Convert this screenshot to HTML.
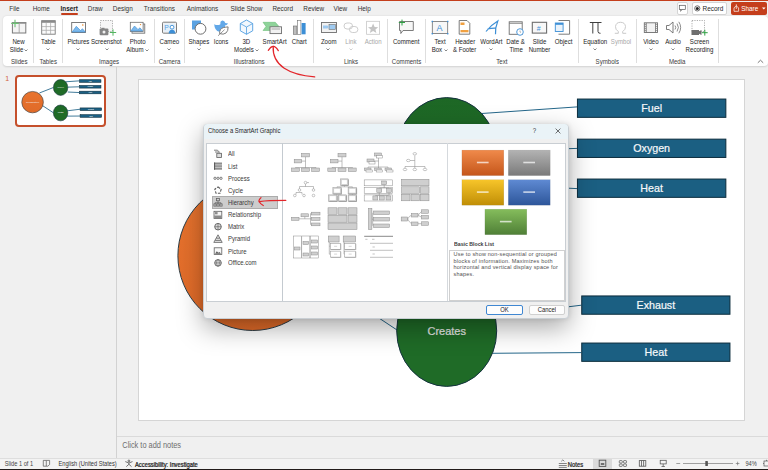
<!DOCTYPE html><html><head><meta charset="utf-8"><style>
*{margin:0;padding:0;box-sizing:border-box}
html,body{width:768px;height:470px;overflow:hidden;background:#f0f0f0;font-family:"Liberation Sans",sans-serif}
.t{position:absolute;white-space:nowrap;font-family:"Liberation Sans",sans-serif;transform:scaleY(1.12)}
.r{position:absolute}
svg{position:absolute;left:0;top:0}
</style></head><body>
<div class="r" style="left:0px;top:0px;width:768px;height:1px;background:#c43e1c"></div>
<div class="t" style="left:-45.62px;width:120px;text-align:center;top:4.82px;font-size:6.4px;line-height:8.959999999999999px;color:#323232;font-weight:400;">File</div>
<div class="t" style="left:-18.75px;width:120px;text-align:center;top:4.82px;font-size:6.4px;line-height:8.959999999999999px;color:#323232;font-weight:400;">Home</div>
<div class="t" style="left:9.25px;width:120px;text-align:center;top:4.82px;font-size:6.4px;line-height:8.959999999999999px;color:#202020;font-weight:700;">Insert</div>
<div class="t" style="left:35.25px;width:120px;text-align:center;top:4.82px;font-size:6.4px;line-height:8.959999999999999px;color:#323232;font-weight:400;">Draw</div>
<div class="t" style="left:62.75px;width:120px;text-align:center;top:4.82px;font-size:6.4px;line-height:8.959999999999999px;color:#323232;font-weight:400;">Design</div>
<div class="t" style="left:99.38px;width:120px;text-align:center;top:4.82px;font-size:6.4px;line-height:8.959999999999999px;color:#323232;font-weight:400;">Transitions</div>
<div class="t" style="left:142.50px;width:120px;text-align:center;top:4.82px;font-size:6.4px;line-height:8.959999999999999px;color:#323232;font-weight:400;">Animations</div>
<div class="t" style="left:186.50px;width:120px;text-align:center;top:4.82px;font-size:6.4px;line-height:8.959999999999999px;color:#323232;font-weight:400;">Slide Show</div>
<div class="t" style="left:222.75px;width:120px;text-align:center;top:4.82px;font-size:6.4px;line-height:8.959999999999999px;color:#323232;font-weight:400;">Record</div>
<div class="t" style="left:253.75px;width:120px;text-align:center;top:4.82px;font-size:6.4px;line-height:8.959999999999999px;color:#323232;font-weight:400;">Review</div>
<div class="t" style="left:280.38px;width:120px;text-align:center;top:4.82px;font-size:6.4px;line-height:8.959999999999999px;color:#323232;font-weight:400;">View</div>
<div class="t" style="left:304.25px;width:120px;text-align:center;top:4.82px;font-size:6.4px;line-height:8.959999999999999px;color:#323232;font-weight:400;">Help</div>
<div class="r" style="left:60.5px;top:13.3px;width:17.700000000000003px;height:1.5px;background:#c43e1c;border-radius:1px"></div>
<div class="r" style="left:677px;top:2.2px;width:10.5px;height:12.600000000000001px;background:#fff;border:1px solid #d4d4d4;border-radius:2px"></div>
<div class="r" style="left:692.4px;top:2.4px;width:34.200000000000045px;height:12.4px;background:#fff;border:1px solid #d4d4d4;border-radius:2px"></div>
<div class="r" style="left:731px;top:2.2px;width:36px;height:12.600000000000001px;background:#c43e1c;border-radius:2px"></div>
<div class="t" style="left:702.50px;top:4.49px;font-size:6.45px;line-height:9.03px;color:#262626;font-weight:400;">Record</div>
<div class="t" style="left:741.20px;top:4.52px;font-size:6.4px;line-height:8.959999999999999px;color:#fff;font-weight:400;">Share</div>
<svg width="768" height="16" style="left:0;top:0"><rect x="679.3" y="5.3" width="6" height="4.3" fill="none" stroke="#555" stroke-width="0.7"/><path d="M680.5 9.6 V11.3 L682.3 9.6" fill="none" stroke="#555" stroke-width="0.6"/><circle cx="697.3" cy="8.4" r="2.6" fill="none" stroke="#333" stroke-width="0.7"/><circle cx="697.3" cy="8.4" r="1.5" fill="#222"/><path d="M734 11.3 V7.8 L736.3 6 L738.6 7.8 V11.3 Z M736.3 4.3 L736.3 9" fill="none" stroke="#fff" stroke-width="0.7"/><path d="M762 7.6 L763.8 9.4 L765.6 7.6 Z" fill="#fff"/></svg>
<div class="r" style="left:3px;top:16px;width:764.6px;height:50.2px;background:#fff;border-radius:4px;box-shadow:0 0.8px 2px rgba(0,0,0,0.13)"></div>
<div class="r" style="left:33.0px;top:19px;width:0.7999999999999972px;height:44.4px;background:#dedede"></div>
<div class="r" style="left:62.0px;top:19px;width:0.7999999999999972px;height:44.4px;background:#dedede"></div>
<div class="r" style="left:154.0px;top:19px;width:0.8000000000000114px;height:44.4px;background:#dedede"></div>
<div class="r" style="left:184.3px;top:19px;width:0.8000000000000114px;height:44.4px;background:#dedede"></div>
<div class="r" style="left:313.25px;top:19px;width:0.8000000000000114px;height:44.4px;background:#dedede"></div>
<div class="r" style="left:387.0px;top:19px;width:0.8000000000000114px;height:44.4px;background:#dedede"></div>
<div class="r" style="left:424.9px;top:19px;width:0.8000000000000114px;height:44.4px;background:#dedede"></div>
<div class="r" style="left:578.0px;top:19px;width:0.7999999999999545px;height:44.4px;background:#dedede"></div>
<div class="r" style="left:635.75px;top:19px;width:0.7999999999999545px;height:44.4px;background:#dedede"></div>
<div class="r" style="left:718.0px;top:19px;width:0.7999999999999545px;height:44.4px;background:#dedede"></div>
<div class="t" style="left:-41.50px;width:120px;text-align:center;top:37.93px;font-size:6.1px;line-height:8.54px;color:#1e1e1e;font-weight:400;">New</div>
<div class="t" style="left:-43.50px;width:120px;text-align:center;top:46.23px;font-size:6.1px;line-height:8.54px;color:#1e1e1e;font-weight:400;">Slide</div>
<svg style="left:24.3px;top:49.3px" width="4" height="3"><path d="M0.5 0.5 L2 2 L3.5 0.5" stroke="#555" stroke-width="0.7" fill="none"/></svg>
<div class="t" style="left:-11.60px;width:120px;text-align:center;top:37.93px;font-size:6.1px;line-height:8.54px;color:#1e1e1e;font-weight:400;">Table</div>
<svg style="left:46.4px;top:47.8px" width="4" height="3"><path d="M0.5 0.5 L2 2 L3.5 0.5" stroke="#555" stroke-width="0.7" fill="none"/></svg>
<div class="t" style="left:18.40px;width:120px;text-align:center;top:37.93px;font-size:6.1px;line-height:8.54px;color:#1e1e1e;font-weight:400;">Pictures</div>
<svg style="left:76.4px;top:47.8px" width="4" height="3"><path d="M0.5 0.5 L2 2 L3.5 0.5" stroke="#555" stroke-width="0.7" fill="none"/></svg>
<div class="t" style="left:46.30px;width:120px;text-align:center;top:37.93px;font-size:6.1px;line-height:8.54px;color:#1e1e1e;font-weight:400;">Screenshot</div>
<svg style="left:105px;top:47.8px" width="4" height="3"><path d="M0.5 0.5 L2 2 L3.5 0.5" stroke="#555" stroke-width="0.7" fill="none"/></svg>
<div class="t" style="left:77.70px;width:120px;text-align:center;top:37.93px;font-size:6.1px;line-height:8.54px;color:#1e1e1e;font-weight:400;">Photo</div>
<div class="t" style="left:74.90px;width:120px;text-align:center;top:46.23px;font-size:6.1px;line-height:8.54px;color:#1e1e1e;font-weight:400;">Album</div>
<svg style="left:145px;top:49.3px" width="4" height="3"><path d="M0.5 0.5 L2 2 L3.5 0.5" stroke="#555" stroke-width="0.7" fill="none"/></svg>
<div class="t" style="left:109.40px;width:120px;text-align:center;top:37.93px;font-size:6.1px;line-height:8.54px;color:#1e1e1e;font-weight:400;">Cameo</div>
<svg style="left:167.1px;top:47.8px" width="4" height="3"><path d="M0.5 0.5 L2 2 L3.5 0.5" stroke="#555" stroke-width="0.7" fill="none"/></svg>
<div class="t" style="left:138.90px;width:120px;text-align:center;top:37.93px;font-size:6.1px;line-height:8.54px;color:#1e1e1e;font-weight:400;">Shapes</div>
<svg style="left:196.75px;top:47.8px" width="4" height="3"><path d="M0.5 0.5 L2 2 L3.5 0.5" stroke="#555" stroke-width="0.7" fill="none"/></svg>
<div class="t" style="left:161.00px;width:120px;text-align:center;top:37.93px;font-size:6.1px;line-height:8.54px;color:#1e1e1e;font-weight:400;">Icons</div>
<div class="t" style="left:186.40px;width:120px;text-align:center;top:37.93px;font-size:6.1px;line-height:8.54px;color:#1e1e1e;font-weight:400;">3D</div>
<div class="t" style="left:183.90px;width:120px;text-align:center;top:46.23px;font-size:6.1px;line-height:8.54px;color:#1e1e1e;font-weight:400;">Models</div>
<svg style="left:254.5px;top:49.3px" width="4" height="3"><path d="M0.5 0.5 L2 2 L3.5 0.5" stroke="#555" stroke-width="0.7" fill="none"/></svg>
<div class="t" style="left:214.60px;width:120px;text-align:center;top:37.93px;font-size:6.1px;line-height:8.54px;color:#1e1e1e;font-weight:400;">SmartArt</div>
<div class="t" style="left:239.20px;width:120px;text-align:center;top:37.93px;font-size:6.1px;line-height:8.54px;color:#1e1e1e;font-weight:400;">Chart</div>
<div class="t" style="left:268.70px;width:120px;text-align:center;top:37.93px;font-size:6.1px;line-height:8.54px;color:#1e1e1e;font-weight:400;">Zoom</div>
<svg style="left:326.1px;top:47.8px" width="4" height="3"><path d="M0.5 0.5 L2 2 L3.5 0.5" stroke="#555" stroke-width="0.7" fill="none"/></svg>
<div class="t" style="left:290.90px;width:120px;text-align:center;top:37.93px;font-size:6.1px;line-height:8.54px;color:#a8a8a8;font-weight:400;">Link</div>
<svg style="left:348.6px;top:47.8px" width="4" height="3"><path d="M0.5 0.5 L2 2 L3.5 0.5" stroke="#bbb" stroke-width="0.7" fill="none"/></svg>
<div class="t" style="left:313.10px;width:120px;text-align:center;top:37.93px;font-size:6.1px;line-height:8.54px;color:#a8a8a8;font-weight:400;">Action</div>
<div class="t" style="left:346.20px;width:120px;text-align:center;top:37.93px;font-size:6.1px;line-height:8.54px;color:#1e1e1e;font-weight:400;">Comment</div>
<div class="t" style="left:380.00px;width:120px;text-align:center;top:37.93px;font-size:6.1px;line-height:8.54px;color:#1e1e1e;font-weight:400;">Text</div>
<div class="t" style="left:376.90px;width:120px;text-align:center;top:46.23px;font-size:6.1px;line-height:8.54px;color:#1e1e1e;font-weight:400;">Box</div>
<svg style="left:443.6px;top:49.3px" width="4" height="3"><path d="M0.5 0.5 L2 2 L3.5 0.5" stroke="#555" stroke-width="0.7" fill="none"/></svg>
<div class="t" style="left:405.20px;width:120px;text-align:center;top:37.93px;font-size:6.1px;line-height:8.54px;color:#1e1e1e;font-weight:400;">Header</div>
<div class="t" style="left:404.60px;width:120px;text-align:center;top:46.23px;font-size:6.1px;line-height:8.54px;color:#1e1e1e;font-weight:400;">&amp; Footer</div>
<div class="t" style="left:431.40px;width:120px;text-align:center;top:37.93px;font-size:6.1px;line-height:8.54px;color:#1e1e1e;font-weight:400;">WordArt</div>
<svg style="left:489.25px;top:47.8px" width="4" height="3"><path d="M0.5 0.5 L2 2 L3.5 0.5" stroke="#555" stroke-width="0.7" fill="none"/></svg>
<div class="t" style="left:455.60px;width:120px;text-align:center;top:37.93px;font-size:6.1px;line-height:8.54px;color:#1e1e1e;font-weight:400;">Date &amp;</div>
<div class="t" style="left:456.20px;width:120px;text-align:center;top:46.23px;font-size:6.1px;line-height:8.54px;color:#1e1e1e;font-weight:400;">Time</div>
<div class="t" style="left:479.50px;width:120px;text-align:center;top:37.93px;font-size:6.1px;line-height:8.54px;color:#1e1e1e;font-weight:400;">Slide</div>
<div class="t" style="left:479.50px;width:120px;text-align:center;top:46.23px;font-size:6.1px;line-height:8.54px;color:#1e1e1e;font-weight:400;">Number</div>
<div class="t" style="left:503.60px;width:120px;text-align:center;top:37.93px;font-size:6.1px;line-height:8.54px;color:#1e1e1e;font-weight:400;">Object</div>
<div class="t" style="left:535.20px;width:120px;text-align:center;top:37.93px;font-size:6.1px;line-height:8.54px;color:#1e1e1e;font-weight:400;">Equation</div>
<svg style="left:593px;top:47.8px" width="4" height="3"><path d="M0.5 0.5 L2 2 L3.5 0.5" stroke="#555" stroke-width="0.7" fill="none"/></svg>
<div class="t" style="left:561.00px;width:120px;text-align:center;top:37.93px;font-size:6.1px;line-height:8.54px;color:#a8a8a8;font-weight:400;">Symbol</div>
<div class="t" style="left:590.90px;width:120px;text-align:center;top:37.93px;font-size:6.1px;line-height:8.54px;color:#1e1e1e;font-weight:400;">Video</div>
<svg style="left:648.6px;top:47.8px" width="4" height="3"><path d="M0.5 0.5 L2 2 L3.5 0.5" stroke="#555" stroke-width="0.7" fill="none"/></svg>
<div class="t" style="left:613.10px;width:120px;text-align:center;top:37.93px;font-size:6.1px;line-height:8.54px;color:#1e1e1e;font-weight:400;">Audio</div>
<svg style="left:671.1px;top:47.8px" width="4" height="3"><path d="M0.5 0.5 L2 2 L3.5 0.5" stroke="#555" stroke-width="0.7" fill="none"/></svg>
<div class="t" style="left:639.50px;width:120px;text-align:center;top:37.93px;font-size:6.1px;line-height:8.54px;color:#1e1e1e;font-weight:400;">Screen</div>
<div class="t" style="left:639.50px;width:120px;text-align:center;top:46.23px;font-size:6.1px;line-height:8.54px;color:#1e1e1e;font-weight:400;">Recording</div>
<div class="t" style="left:-40.80px;width:120px;text-align:center;top:58.03px;font-size:6.1px;line-height:8.54px;color:#3c3c3c;font-weight:400;">Slides</div>
<div class="t" style="left:-11.80px;width:120px;text-align:center;top:58.03px;font-size:6.1px;line-height:8.54px;color:#3c3c3c;font-weight:400;">Tables</div>
<div class="t" style="left:49.10px;width:120px;text-align:center;top:58.03px;font-size:6.1px;line-height:8.54px;color:#3c3c3c;font-weight:400;">Images</div>
<div class="t" style="left:109.50px;width:120px;text-align:center;top:58.03px;font-size:6.1px;line-height:8.54px;color:#3c3c3c;font-weight:400;">Camera</div>
<div class="t" style="left:189.20px;width:120px;text-align:center;top:58.03px;font-size:6.1px;line-height:8.54px;color:#3c3c3c;font-weight:400;">Illustrations</div>
<div class="t" style="left:291.00px;width:120px;text-align:center;top:58.03px;font-size:6.1px;line-height:8.54px;color:#3c3c3c;font-weight:400;">Links</div>
<div class="t" style="left:346.50px;width:120px;text-align:center;top:58.03px;font-size:6.1px;line-height:8.54px;color:#3c3c3c;font-weight:400;">Comments</div>
<div class="t" style="left:441.90px;width:120px;text-align:center;top:58.03px;font-size:6.1px;line-height:8.54px;color:#3c3c3c;font-weight:400;">Text</div>
<div class="t" style="left:547.30px;width:120px;text-align:center;top:58.03px;font-size:6.1px;line-height:8.54px;color:#3c3c3c;font-weight:400;">Symbols</div>
<div class="t" style="left:617.20px;width:120px;text-align:center;top:58.03px;font-size:6.1px;line-height:8.54px;color:#3c3c3c;font-weight:400;">Media</div>
<svg style="left:757px;top:59px" width="7" height="5"><path d="M0.8 3.8 L3.5 1.2 L6.2 3.8" stroke="#555" stroke-width="0.8" fill="none"/></svg>
<svg width="768" height="70" style="left:0;top:0"><rect x="12.4" y="22.6" width="13.4" height="10.4" fill="#f4f4f4" stroke="#7a7a7a" stroke-width="1"/><rect x="12" y="22.1" width="14.2" height="1.6" fill="#8a8a8a"/><path d="M19.2 23.7 V33" stroke="#9a9a9a" stroke-width="0.8"/><path d="M15 19.7 V27.2 M11.2 23.4 H18.8" stroke="#6cc074" stroke-width="1.1"/><rect x="41.7" y="20.7" width="13.5" height="13.5" fill="#fbfbfb" stroke="#7a7a7a" stroke-width="0.9"/><rect x="41.5" y="20.5" width="13.9" height="2.3" fill="#8a8a8a"/><path d="M46.2 22.8 V34 M50.6 22.8 V34 M42 26.6 H55 M42 30.3 H55" stroke="#a8a8a8" stroke-width="0.75"/><rect x="71.7" y="22.5" width="13.8" height="10" fill="#fff" stroke="#6e6e6e" stroke-width="0.9"/><path d="M72.2 32 L76.3 26.3 L80.5 30.5 L82.5 28.8 L85.3 32 Z" fill="#7db9ec" stroke="#3d8fd6" stroke-width="0.6"/><circle cx="82.8" cy="25" r="0.8" fill="#f08a24"/><rect x="100.5" y="20.5" width="12" height="11" fill="#f6f6f6" stroke="#8a8a8a" stroke-width="0.7" stroke-dasharray="1.2 1.2"/><rect x="99.6" y="28.6" width="8.8" height="6.6" rx="1" fill="#858585"/><rect x="101.5" y="27.8" width="3" height="1.2" fill="#858585"/><circle cx="104" cy="31.9" r="1.5" fill="#f0f0f0"/><path d="M113 29.3 V35.7 M109.8 32.5 H116.2" stroke="#52b560" stroke-width="1"/><rect x="132" y="24" width="12.8" height="9.2" fill="#e8e8e8" stroke="#6e6e6e" stroke-width="0.8"/><rect x="130.3" y="22.3" width="12.8" height="9.2" fill="#fff" stroke="#6e6e6e" stroke-width="0.8"/><path d="M130.8 31 L134.5 26 L138 29.5 L140 27.8 L142.6 31 Z" fill="#7db9ec" stroke="#3d8fd6" stroke-width="0.6"/><circle cx="140.5" cy="24.6" r="0.7" fill="#f08a24"/><rect x="162.5" y="22.2" width="14" height="11" rx="1" fill="#f2f2f2" stroke="#6e6e6e" stroke-width="0.9"/><rect x="164" y="23.6" width="11" height="8.2" fill="#e3effa"/><text x="164.3" y="30" font-size="6.8" fill="#5aa2e2" font-family="Liberation Sans">P</text><circle cx="172" cy="27.2" r="1.9" fill="#fff" stroke="#3d8fd6" stroke-width="0.9"/><path d="M168.6 33.6 Q168.8 29.8 172 29.8 Q175.2 29.8 175.4 33.6Z" fill="#3d8fd6"/><rect x="192" y="20.5" width="9" height="9" fill="#5aa2e2"/><circle cx="200.5" cy="28.8" r="5.4" fill="#fff" stroke="#6e6e6e" stroke-width="1"/><path d="M214.2 24.2 Q214.6 30.8 219.3 31.8 L222.8 31.6 Q225.6 28.2 224.9 25.6 L226.6 24.9 L228.1 23.4 L225.3 23.1 Q224.6 20.4 222.4 20.6 Q220 21 220.4 24.2 Q217.8 26 214.2 24.2 Z" fill="#62a8e8"/><path d="M219.6 33.6 Q219.4 28.8 223.4 27.6 Q226 27 228.1 26.9 Q228.3 31 226 33 Q223.4 35 219.6 33.6 Z" fill="#fff" stroke="#6e6e6e" stroke-width="0.9"/><path d="M218 35.8 L224.6 29.6" stroke="#6e6e6e" stroke-width="0.7"/><path d="M246.5 20 L252.7 23.5 V30.8 L246.5 34.3 L240.3 30.8 V23.5 Z" fill="#f3f8fd" stroke="#4f9de0" stroke-width="0.9"/><path d="M240.3 23.5 L246.5 27 L252.7 23.5 M246.5 27 V34.3" fill="none" stroke="#4f9de0" stroke-width="0.8"/><path d="M263 22.3 L275.3 22.3 L279 26.5 L275.3 30.5 L263 30.5 L266 26.4 Z" fill="#8fd39a" stroke="#5cb96a" stroke-width="0.5"/><rect x="270" y="26.8" width="11.5" height="6.8" fill="#f2f2f2" stroke="#6e6e6e" stroke-width="0.9"/><line x1="271.5" y1="29" x2="280" y2="29" stroke="#6e6e6e" stroke-width="0.6"/><rect x="293.3" y="26" width="3.6" height="8.3" fill="#bdbdbd" stroke="#6e6e6e" stroke-width="0.6"/><rect x="297.3" y="20.5" width="3.6" height="13.8" fill="#fff" stroke="#6e6e6e" stroke-width="0.6"/><rect x="301.6" y="23" width="4" height="11.3" fill="#3d8fd6"/><rect x="321.5" y="22.5" width="15" height="10" fill="#f2f2f2" stroke="#6e6e6e" stroke-width="0.9"/><rect x="329" y="24.5" width="6.3" height="5" fill="#9fcaf0" stroke="#6e6e6e" stroke-width="0.6"/><path d="M323 25.5 H327.5 L329 27 L327.5 28.5 H323 Z" fill="#9fcaf0"/><rect x="344" y="23" width="8.5" height="6" rx="3" fill="none" stroke="#c8c8c8" stroke-width="0.9"/><rect x="349.4" y="26.5" width="8.5" height="6" rx="3" fill="none" stroke="#c8c8c8" stroke-width="0.9"/><rect x="366.6" y="21.3" width="13" height="13" fill="none" stroke="#c8c8c8" stroke-width="0.8"/><path d="M373.1 23.5 L374.6 27 L378.2 27.2 L375.4 29.4 L376.4 33 L373.1 31 L369.8 33 L370.8 29.4 L368 27.2 L371.6 27 Z" fill="#c4c4c4"/><path d="M399.5 21.5 H413.3 V30.5 H403 L400.8 33.5 V30.5 H399.5 Z" fill="#f7f7f7" stroke="#6e6e6e" stroke-width="0.9"/><path d="M402 19.6 V25.5 M398.8 22.5 H405" stroke="#2ea043" stroke-width="1"/><rect x="432.3" y="21.5" width="15.4" height="12" fill="#f7f7f7" stroke="#6e6e6e" stroke-width="0.8"/><text x="436.5" y="31" font-size="9" fill="#3d8fd6" font-family="Liberation Sans">A</text><g fill="#3d8fd6"><rect x="431.6" y="20.8" width="1.4" height="1.4"/><rect x="447" y="20.8" width="1.4" height="1.4"/><rect x="431.6" y="33" width="1.4" height="1.4"/><rect x="447" y="33" width="1.4" height="1.4"/></g><path d="M459.2 20.5 H467 L469.8 23.3 V34.2 H459.2 Z" fill="#fff" stroke="#6e6e6e" stroke-width="0.9"/><rect x="460.5" y="22.5" width="4" height="2.5" fill="#f0a040"/><rect x="460.5" y="30" width="8" height="2.3" fill="#f0a040"/><path d="M486 31.5 Q491 25 497.8 21 Q495 28 495.5 34.3 M487.5 29 Q492 28 496 28.2" fill="none" stroke="#3d8fd6" stroke-width="1.2"/><rect x="509.2" y="21.8" width="13" height="12.5" fill="#fff" stroke="#6e6e6e" stroke-width="0.9"/><path d="M509.2 23.3 H522.2" stroke="#6e6e6e" stroke-width="0.8"/><circle cx="520" cy="32" r="3.3" fill="#fff" stroke="#3d8fd6" stroke-width="0.9"/><path d="M520 30.5 V32 L521 32.5" stroke="#6e6e6e" stroke-width="0.5" fill="none"/><rect x="532.3" y="22.3" width="14.3" height="10.8" fill="#f7f7f7" stroke="#6e6e6e" stroke-width="1.1"/><text x="536.8" y="30.6" font-size="7" fill="#3d8fd6" font-family="Liberation Sans">#</text><path d="M558.5 20.5 H569.6 V34.2 H558.5" fill="#fff" stroke="#6e6e6e" stroke-width="0.9"/><rect x="555.3" y="23" width="7.8" height="8.5" fill="#eaf3fb" stroke="#3d8fd6" stroke-width="0.9"/><rect x="555.3" y="23" width="7.8" height="1.8" fill="#3d8fd6"/><path d="M589.8 22.5 H601.5 M592.8 22.5 V33.5 M598 22.5 V31.5 Q598 33.5 600.5 33.3" fill="none" stroke="#404040" stroke-width="1"/><path d="M614.8 33.3 H618.3 V31.5 Q615.2 29.5 615.5 26.5 Q616 22.3 620.5 22.3 Q625 22.3 625.5 26.5 Q625.8 29.5 622.7 31.5 V33.3 H626.2" fill="none" stroke="#c4c4c4" stroke-width="0.9"/><rect x="644.3" y="22.8" width="13.2" height="9.7" fill="#f2f2f2" stroke="#6e6e6e" stroke-width="0.9"/><path d="M646.3 23 V32.3 M655.5 23 V32.3" stroke="#6e6e6e" stroke-width="0.8"/><path d="M644.5 24.5 H646 M644.5 26.5 H646 M644.5 28.5 H646 M644.5 30.5 H646 M655.8 24.5 H657.3 M655.8 26.5 H657.3 M655.8 28.5 H657.3 M655.8 30.5 H657.3" stroke="#6e6e6e" stroke-width="0.6"/><path d="M666.5 25.5 H669 L673 22 V33 L669 29.5 H666.5 Z" fill="#fff" stroke="#6e6e6e" stroke-width="0.9"/><path d="M675 25.5 Q676.5 27.5 675 29.5 M677 23.5 Q679.8 27.5 677 31.5 M678.8 21.8 Q682.5 27.5 678.8 33.3" fill="none" stroke="#6e6e6e" stroke-width="0.8"/><rect x="692" y="20.5" width="12.5" height="11" fill="none" stroke="#8a8a8a" stroke-width="0.7" stroke-dasharray="1.2 1.2"/><rect x="691.5" y="30" width="7.5" height="5" fill="#6e6e6e"/><path d="M699 31.2 L701.5 30 V35 L699 33.8Z" fill="#6e6e6e"/><path d="M704.8 29.8 V35.6 M701.9 32.7 H707.7" stroke="#2ea043" stroke-width="1"/></svg>
<div class="r" style="left:116.1px;top:66.5px;width:0.7000000000000028px;height:391.5px;background:#d2d2d2"></div>
<div class="t" style="left:5.30px;top:73.70px;font-size:7px;line-height:9.799999999999999px;color:#d0613f;font-weight:400;">1</div>
<div class="r" style="left:14.5px;top:74.7px;width:91.4px;height:52.5px;border:2.1px solid #c5502c;border-radius:4px;background:#fff"></div>
<svg style="left:16.4px;top:76.6px" width="87.60" height="48.80" viewBox="0 0 606.1 340.8" preserveAspectRatio="none"><line x1="162.70" y1="111.40" x2="259.20" y2="73.40" stroke="#24668a" stroke-width="6"/><line x1="179.70" y1="197.40" x2="259.30" y2="250.20" stroke="#24668a" stroke-width="6"/><line x1="343.90" y1="33.50" x2="439.00" y2="26.90" stroke="#24668a" stroke-width="6"/><line x1="358.30" y1="70.90" x2="439.00" y2="68.40" stroke="#24668a" stroke-width="6"/><line x1="358.70" y1="104.90" x2="439.00" y2="108.60" stroke="#24668a" stroke-width="6"/><line x1="356.70" y1="235.90" x2="443.30" y2="225.20" stroke="#24668a" stroke-width="6"/><line x1="354.50" y1="273.30" x2="443.30" y2="272.60" stroke="#24668a" stroke-width="6"/><defs><linearGradient id="og2" x1="0" y1="0" x2="0" y2="1"><stop offset="0" stop-color="#e8742f"/><stop offset="1" stop-color="#e06a28"/></linearGradient><linearGradient id="gg2" x1="0" y1="0" x2="0" y2="1"><stop offset="0" stop-color="#1d6725"/><stop offset="0.4" stop-color="#1f6b27"/><stop offset="1" stop-color="#1f6b27"/></linearGradient></defs><circle cx="114.69999999999999" cy="175.70000000000002" r="74.8" fill="url(#og2)" stroke="#2a3b45" stroke-width="4"/><ellipse cx="308.7" cy="73.1" rx="50" ry="55.5" fill="url(#gg2)" stroke="#15323f" stroke-width="4"/><ellipse cx="308.7" cy="250.9" rx="50" ry="55.5" fill="url(#gg2)" stroke="#15323f" stroke-width="4"/><rect x="439.45" y="19.05" width="148.40" height="18.30" fill="#1b5f82" stroke="#0b2c3c" stroke-width="4"/><text x="513.65" y="32.00" font-size="10.7" fill="#f6f8fa" stroke="#f6f8fa" stroke-width="0.2" text-anchor="middle" font-family="Liberation Sans">Fuel</text><rect x="439.45" y="59.15" width="148.40" height="18.30" fill="#1b5f82" stroke="#0b2c3c" stroke-width="4"/><text x="513.65" y="72.10" font-size="10.7" fill="#f6f8fa" stroke="#f6f8fa" stroke-width="0.2" text-anchor="middle" font-family="Liberation Sans">Oxygen</text><rect x="439.45" y="99.05" width="148.40" height="18.30" fill="#1b5f82" stroke="#0b2c3c" stroke-width="4"/><text x="513.65" y="112.00" font-size="10.7" fill="#f6f8fa" stroke="#f6f8fa" stroke-width="0.2" text-anchor="middle" font-family="Liberation Sans">Heat</text><rect x="443.75" y="215.95" width="148.20" height="18.30" fill="#1b5f82" stroke="#0b2c3c" stroke-width="4"/><text x="517.85" y="228.90" font-size="10.7" fill="#f6f8fa" stroke="#f6f8fa" stroke-width="0.2" text-anchor="middle" font-family="Liberation Sans">Exhaust</text><rect x="443.75" y="263.05" width="148.20" height="18.30" fill="#1b5f82" stroke="#0b2c3c" stroke-width="4"/><text x="517.85" y="276.00" font-size="10.7" fill="#f6f8fa" stroke="#f6f8fa" stroke-width="0.2" text-anchor="middle" font-family="Liberation Sans">Heat</text><text x="308.7" y="254.8" font-size="11" fill="#e8e8e8" stroke="#e8e8e8" stroke-width="0.2" text-anchor="middle" font-family="Liberation Sans">Creates</text><text x="308.7" y="77.0" font-size="11" fill="#e6e6e6" text-anchor="middle" font-family="Liberation Sans">Requires</text><text x="114.69999999999999" y="181.20000000000002" font-size="17" fill="#f4f4f4" text-anchor="middle" font-family="Liberation Sans">Combustion</text></svg>
<div class="r" style="left:139px;top:80px;width:605px;height:340px;background:#fff;box-shadow:0 0 0 1px rgba(0,0,0,0.11)"></div>
<svg style="left:138.3px;top:79.6px" width="606.1" height="340.8" viewBox="0 0 606.1 340.8"><line x1="162.70" y1="111.40" x2="259.20" y2="73.40" stroke="#24668a" stroke-width="1.0"/><line x1="179.70" y1="197.40" x2="259.30" y2="250.20" stroke="#24668a" stroke-width="1.0"/><line x1="343.90" y1="33.50" x2="439.00" y2="26.90" stroke="#24668a" stroke-width="1.0"/><line x1="358.30" y1="70.90" x2="439.00" y2="68.40" stroke="#24668a" stroke-width="1.0"/><line x1="358.70" y1="104.90" x2="439.00" y2="108.60" stroke="#24668a" stroke-width="1.0"/><line x1="356.70" y1="235.90" x2="443.30" y2="225.20" stroke="#24668a" stroke-width="1.0"/><line x1="354.50" y1="273.30" x2="443.30" y2="272.60" stroke="#24668a" stroke-width="1.0"/><defs><linearGradient id="og" x1="0" y1="0" x2="0" y2="1"><stop offset="0" stop-color="#e8742f"/><stop offset="1" stop-color="#e06a28"/></linearGradient><linearGradient id="gg" x1="0" y1="0" x2="0" y2="1"><stop offset="0" stop-color="#1d6725"/><stop offset="0.4" stop-color="#1f6b27"/><stop offset="1" stop-color="#1f6b27"/></linearGradient></defs><circle cx="114.69999999999999" cy="175.70000000000002" r="74.8" fill="url(#og)" stroke="#2a3b45" stroke-width="1.0"/><ellipse cx="308.7" cy="73.1" rx="50" ry="55.5" fill="url(#gg)" stroke="#15323f" stroke-width="1.0"/><ellipse cx="308.7" cy="250.9" rx="50" ry="55.5" fill="url(#gg)" stroke="#15323f" stroke-width="1.0"/><rect x="439.45" y="19.05" width="148.40" height="18.30" fill="#1b5f82" stroke="#0b2c3c" stroke-width="1.0"/><text x="513.65" y="32.00" font-size="10.7" fill="#f6f8fa" stroke="#f6f8fa" stroke-width="0.2" text-anchor="middle" font-family="Liberation Sans">Fuel</text><rect x="439.45" y="59.15" width="148.40" height="18.30" fill="#1b5f82" stroke="#0b2c3c" stroke-width="1.0"/><text x="513.65" y="72.10" font-size="10.7" fill="#f6f8fa" stroke="#f6f8fa" stroke-width="0.2" text-anchor="middle" font-family="Liberation Sans">Oxygen</text><rect x="439.45" y="99.05" width="148.40" height="18.30" fill="#1b5f82" stroke="#0b2c3c" stroke-width="1.0"/><text x="513.65" y="112.00" font-size="10.7" fill="#f6f8fa" stroke="#f6f8fa" stroke-width="0.2" text-anchor="middle" font-family="Liberation Sans">Heat</text><rect x="443.75" y="215.95" width="148.20" height="18.30" fill="#1b5f82" stroke="#0b2c3c" stroke-width="1.0"/><text x="517.85" y="228.90" font-size="10.7" fill="#f6f8fa" stroke="#f6f8fa" stroke-width="0.2" text-anchor="middle" font-family="Liberation Sans">Exhaust</text><rect x="443.75" y="263.05" width="148.20" height="18.30" fill="#1b5f82" stroke="#0b2c3c" stroke-width="1.0"/><text x="517.85" y="276.00" font-size="10.7" fill="#f6f8fa" stroke="#f6f8fa" stroke-width="0.2" text-anchor="middle" font-family="Liberation Sans">Heat</text><text x="308.7" y="254.8" font-size="11" fill="#e8e8e8" stroke="#e8e8e8" stroke-width="0.2" text-anchor="middle" font-family="Liberation Sans">Creates</text><text x="308.7" y="77.0" font-size="11" fill="#e6e6e6" text-anchor="middle" font-family="Liberation Sans">Requires</text><text x="114.69999999999999" y="181.20000000000002" font-size="17" fill="#f4f4f4" text-anchor="middle" font-family="Liberation Sans">Combustion</text></svg>
<div class="r" style="left:117px;top:435.5px;width:651px;height:1.0px;background:#dadada"></div>
<div class="t" style="left:122.30px;top:440.92px;font-size:7.4px;line-height:10.36px;color:#6e6e6e;font-weight:400;">Click to add notes</div>
<div class="r" style="left:0px;top:459px;width:768px;height:11px;background:#f3f3f3"></div>
<div class="r" style="left:0px;top:458.3px;width:768px;height:0.6999999999999886px;background:#dedede"></div>
<div class="r" style="left:0px;top:468.5px;width:768px;height:1.5px;background:#221c1a"></div>
<div class="t" style="left:4.70px;top:460.91px;font-size:5.7px;line-height:7.9799999999999995px;color:#444;font-weight:400;">Slide 1 of 1</div>
<div class="t" style="left:58.50px;top:460.91px;font-size:5.7px;line-height:7.9799999999999995px;color:#333;font-weight:400;">English (United States)</div>
<div class="t" style="left:135.00px;top:460.64px;font-size:5.8px;line-height:8.12px;color:#1a1a1a;font-weight:400;-webkit-text-stroke:0.22px #1a1a1a">Accessibility: Investigate</div>
<div class="t" style="left:567.80px;top:460.70px;font-size:5.85px;line-height:8.19px;color:#222;font-weight:400;-webkit-text-stroke:0.2px #222">Notes</div>
<div class="r" style="left:593.2px;top:459px;width:19.0px;height:9.600000000000023px;background:#dadada"></div>
<div class="t" style="right:11.20px;text-align:right;top:460.91px;font-size:5.7px;line-height:7.9799999999999995px;color:#444;font-weight:400;">94%</div>
<svg width="768" height="470" style="left:0;top:0">
<path d="M43.3 460.4 H46.3 V466.2 H43.3 Z M46.3 460.4 H49.6 V464.6 L47.8 466.2 H46.3" fill="none" stroke="#555" stroke-width="0.7"/>
<g fill="none" stroke="#444" stroke-width="0.75"><circle cx="128.9" cy="460.9" r="0.9"/><path d="M125.3 461.6 L128.9 463 L132.5 461.6 M128.9 463 V464.3 L126.3 466.6 M128.9 464.3 L131.5 466.6"/></g>
<g stroke="#555" stroke-width="0.7" fill="none"><path d="M558.8 463.5 H566.8 M558.8 465.5 H566.8 M558.8 467.4 H566.8"/><path d="M561.3 461.3 L562.8 459.9 L564.3 461.3"/></g>
<rect x="599.2" y="460.2" width="6.6" height="6.2" fill="none" stroke="#555" stroke-width="0.9"/><rect x="600.8" y="463.2" width="3.5" height="1.6" fill="#555"/>
<g fill="none" stroke="#555" stroke-width="0.75"><rect x="619.3" y="460.6" width="3" height="2.4" rx="0.6"/><rect x="623.5" y="460.6" width="3" height="2.4" rx="0.6"/><rect x="619.3" y="464" width="3" height="2.4" rx="0.6"/><rect x="623.5" y="464" width="3" height="2.4" rx="0.6"/></g>
<g fill="none" stroke="#555" stroke-width="0.8"><rect x="639.3" y="460.6" width="6.5" height="5.6"/><path d="M641.5 460.6 V466.2 M643.6 460.6 V466.2"/></g>
<g fill="none" stroke="#555" stroke-width="0.75"><rect x="660.2" y="460.3" width="6" height="3.6"/><path d="M663.2 463.9 V466.3 M661.5 466.5 H664.9"/></g>
<path d="M676.3 463.5 H680.2 M683 463.5 H733 M735.8 463.5 H739.4 M737.6 461.7 V465.3" stroke="#666" stroke-width="0.6"/>
<rect x="705.3" y="460.9" width="2.6" height="5.2" rx="0.6" fill="#555"/>
<g fill="none" stroke="#555" stroke-width="0.7"><rect x="764" y="461" width="5" height="5"/><path d="M763 463.5 H764 M766.5 459.8 V461"/></g>
</svg>
<div class="r" style="left:203.2px;top:123.6px;width:365.7px;height:195.6px;background:#f0f0f0;border:0.8px solid #c9cfd4;border-radius:4px;box-shadow:0 9px 26px rgba(0,0,0,0.34),0 0 5px rgba(0,0,0,0.1);overflow:hidden"></div>
<div class="r" style="left:204.0px;top:124.39999999999999px;width:364.1px;height:14.600000000000009px;background:#eaf3f7;border-radius:3.5px 3.5px 0 0"></div>
<div class="t" style="left:208.00px;top:127.47px;font-size:5.9px;line-height:8.26px;color:#1f1f1f;font-weight:400;">Choose a SmartArt Graphic</div>
<div class="t" style="left:474.60px;width:120px;text-align:center;top:126.86px;font-size:6.2px;line-height:8.68px;color:#333;font-weight:400;">?</div>
<svg style="left:554.5px;top:128.3px" width="6" height="6"><path d="M0.6 0.6 L5.4 5.4 M5.4 0.6 L0.6 5.4" stroke="#333" stroke-width="0.7"/></svg>
<div class="r" style="left:206.4px;top:142.5px;width:359.6px;height:159.5px;background:#fff;border:0.8px solid #c9ced3"></div>
<div class="r" style="left:282.1px;top:142.7px;width:0.7999999999999545px;height:158.8px;background:#c4cad0"></div>
<div class="r" style="left:446.5px;top:142.7px;width:0.8000000000000114px;height:158.8px;background:#d5d9dd"></div>
<div class="r" style="left:212.3px;top:196.4px;width:65.30000000000001px;height:12.299999999999983px;background:#cdcdcd;border:0.8px solid #acacac"></div>
<div class="t" style="left:228.00px;top:150.20px;font-size:6.0px;line-height:8.399999999999999px;color:#3a3a3a;font-weight:400;">All</div>
<div class="t" style="left:228.00px;top:162.50px;font-size:6.0px;line-height:8.399999999999999px;color:#3a3a3a;font-weight:400;">List</div>
<div class="t" style="left:228.00px;top:174.70px;font-size:6.0px;line-height:8.399999999999999px;color:#3a3a3a;font-weight:400;">Process</div>
<div class="t" style="left:228.00px;top:186.80px;font-size:6.0px;line-height:8.399999999999999px;color:#3a3a3a;font-weight:400;">Cycle</div>
<div class="t" style="left:228.00px;top:199.00px;font-size:6.0px;line-height:8.399999999999999px;color:#3a3a3a;font-weight:400;">Hierarchy</div>
<div class="t" style="left:228.00px;top:211.30px;font-size:6.0px;line-height:8.399999999999999px;color:#3a3a3a;font-weight:400;">Relationship</div>
<div class="t" style="left:228.00px;top:223.10px;font-size:6.0px;line-height:8.399999999999999px;color:#3a3a3a;font-weight:400;">Matrix</div>
<div class="t" style="left:228.00px;top:235.20px;font-size:6.0px;line-height:8.399999999999999px;color:#3a3a3a;font-weight:400;">Pyramid</div>
<div class="t" style="left:228.00px;top:247.50px;font-size:6.0px;line-height:8.399999999999999px;color:#3a3a3a;font-weight:400;">Picture</div>
<div class="t" style="left:228.00px;top:259.30px;font-size:6.0px;line-height:8.399999999999999px;color:#3a3a3a;font-weight:400;">Office.com</div>
<svg width="768" height="470" style="left:0;top:0"><path d="M214 150.20000000000002 h3.5 l2 2" fill="none" stroke="#5e5e5e" stroke-width="0.8"/><path d="M215 152.0 h3.5 l1.5 1.5" fill="none" stroke="#5e5e5e" stroke-width="0.8"/><rect x="216.8" y="153.3" width="4.6" height="4.2" fill="#ddd" stroke="#5e5e5e" stroke-width="0.8"/><rect x="214" y="162.5" width="8" height="7.2" fill="#8e8e8e"/><path d="M214 164.9 h8 M214 167.29999999999998 h8" stroke="#e8e8e8" stroke-width="0.7"/><path d="M214.6 162.5 v7.2" stroke="#555" stroke-width="1"/><g fill="none" stroke="#5e5e5e" stroke-width="0.8"><circle cx="215" cy="178.3" r="1.15"/><circle cx="218" cy="178.3" r="1.15"/><circle cx="221" cy="178.3" r="1.15"/></g><path d="M218 187.0 L221.2 189.20000000000002 L220 193.20000000000002 L216 193.20000000000002 L214.8 189.20000000000002 Z" fill="none" stroke="#5e5e5e" stroke-width="1.1" stroke-dasharray="2.6 1.2"/><g fill="none" stroke="#5e5e5e" stroke-width="0.75"><rect x="216.6" y="198.6" width="2.8" height="2.2"/><path d="M218 200.79999999999998 V202.79999999999998 M215 203.9 V202.79999999999998 H221 V203.9 M218 202.79999999999998 V203.9"/><rect x="213.9" y="203.9" width="2.2" height="2.2"/><rect x="216.9" y="203.9" width="2.2" height="2.2"/><rect x="219.9" y="203.9" width="2.2" height="2.2"/></g><rect x="214" y="211.3" width="7.8" height="7.2" fill="#f4f4f4" stroke="#5e5e5e" stroke-width="0.8"/><rect x="214.2" y="215.5" width="7.4" height="2.8" fill="#8a8a8a"/><rect x="215" y="212.1" width="2.6" height="2.2" fill="#8a8a8a"/><circle cx="218" cy="226.7" r="3.3" fill="#d8d8d8" stroke="#5e5e5e" stroke-width="0.9"/><path d="M218 223.39999999999998 V230.0 M214.7 226.7 H221.3" stroke="#5e5e5e" stroke-width="0.6"/><path d="M218 234.8 L222.2 242.4 H213.8 Z" fill="#e4e4e4" stroke="#5e5e5e" stroke-width="0.8"/><path d="M216.3 238.20000000000002 H219.7 M215.2 240.4 H220.8" stroke="#5e5e5e" stroke-width="0.8"/><rect x="214.2" y="247.79999999999998" width="7.6" height="6.6" fill="#f8f8f8" stroke="#5e5e5e" stroke-width="0.8"/><path d="M215 253.7 L216.8 251.29999999999998 L218.3 252.7 L219.5 251.9 L221 253.7Z" fill="#5e5e5e"/><circle cx="218" cy="262.9" r="3.3" fill="#e0e0e0" stroke="#5e5e5e" stroke-width="0.9"/><ellipse cx="218" cy="262.9" rx="1.4" ry="3.3" fill="none" stroke="#5e5e5e" stroke-width="0.6"/><path d="M214.7 262.9 H221.3" stroke="#5e5e5e" stroke-width="0.6"/></svg>
<svg width="768" height="470" style="left:0;top:0"><rect x="301.50" y="153.40" width="8.00" height="3.50" fill="#cfcfcf" stroke="#8c8c8c" stroke-width="0.5"/><rect x="294.20" y="159.40" width="7.50" height="3.50" fill="#cfcfcf" stroke="#8c8c8c" stroke-width="0.5"/><path d="M305.5 156.9 V167.5 M301.7 161.1 H305.5 M295.5 167.5 H316 M295.5 167.5 V168 M305.5 167.5 V168 M316 167.5 V168" fill="none" stroke="#8c8c8c" stroke-width="0.55"/><rect x="291.50" y="168.00" width="8.00" height="3.50" fill="#cfcfcf" stroke="#8c8c8c" stroke-width="0.5"/><rect x="301.50" y="168.00" width="8.00" height="3.50" fill="#cfcfcf" stroke="#8c8c8c" stroke-width="0.5"/><rect x="311.60" y="168.00" width="8.00" height="3.50" fill="#cfcfcf" stroke="#8c8c8c" stroke-width="0.5"/><rect x="338.00" y="153.40" width="8.00" height="3.50" fill="#cfcfcf" stroke="#8c8c8c" stroke-width="0.5"/><rect x="330.50" y="159.40" width="7.50" height="3.50" fill="#cfcfcf" stroke="#8c8c8c" stroke-width="0.5"/><path d="M342 156.9 V167.5 M338 161.1 H342 M332 167.5 H352.5 M332 167.5 V168 M342 167.5 V168 M352.5 167.5 V168" fill="none" stroke="#8c8c8c" stroke-width="0.55"/><rect x="327.80" y="168.00" width="8.00" height="3.50" fill="#cfcfcf" stroke="#8c8c8c" stroke-width="0.5"/><rect x="338.00" y="168.00" width="8.00" height="3.50" fill="#cfcfcf" stroke="#8c8c8c" stroke-width="0.5"/><rect x="348.20" y="168.00" width="8.00" height="3.50" fill="#cfcfcf" stroke="#8c8c8c" stroke-width="0.5"/><rect x="374.50" y="153.00" width="7.00" height="3.00" fill="#cfcfcf" stroke="#8c8c8c" stroke-width="0.5"/><rect x="376.50" y="155.50" width="6.00" height="2.50" fill="#fff" stroke="#8c8c8c" stroke-width="0.5"/><rect x="367.00" y="159.00" width="7.00" height="3.00" fill="#cfcfcf" stroke="#8c8c8c" stroke-width="0.5"/><rect x="369.00" y="161.50" width="6.00" height="2.50" fill="#fff" stroke="#8c8c8c" stroke-width="0.5"/><path d="M378.5 158 V167 M374 161 H378.5 M368 167 H388 M368 167 V168 M378.5 167 V168 M388 167 V168" fill="none" stroke="#8c8c8c" stroke-width="0.55"/><rect x="364.50" y="168.00" width="6.50" height="2.50" fill="#cfcfcf" stroke="#8c8c8c" stroke-width="0.5"/><rect x="366.00" y="170.00" width="6.50" height="2.00" fill="#fff" stroke="#8c8c8c" stroke-width="0.5"/><rect x="374.70" y="168.00" width="6.50" height="2.50" fill="#cfcfcf" stroke="#8c8c8c" stroke-width="0.5"/><rect x="376.20" y="170.00" width="6.50" height="2.00" fill="#fff" stroke="#8c8c8c" stroke-width="0.5"/><rect x="385.00" y="168.00" width="6.50" height="2.50" fill="#cfcfcf" stroke="#8c8c8c" stroke-width="0.5"/><rect x="386.50" y="170.00" width="6.50" height="2.00" fill="#fff" stroke="#8c8c8c" stroke-width="0.5"/><path d="M414.8 155.5 V166.5 M409.5 160.5 H414.8 M405 166.5 H425 M405 166.5 V168 M414.8 166.5 V168 M425 166.5 V168" fill="none" stroke="#8c8c8c" stroke-width="0.55"/><ellipse cx="414.8" cy="153.8" rx="1.8" ry="1.2" fill="#fff" stroke="#8c8c8c" stroke-width="0.5"/><ellipse cx="408.3" cy="160.5" rx="1.8" ry="1.2" fill="#fff" stroke="#8c8c8c" stroke-width="0.5"/><ellipse cx="405" cy="169.5" rx="1.8" ry="1.2" fill="#fff" stroke="#8c8c8c" stroke-width="0.5"/><ellipse cx="414.8" cy="169.5" rx="1.8" ry="1.2" fill="#fff" stroke="#8c8c8c" stroke-width="0.5"/><ellipse cx="425" cy="169.5" rx="1.8" ry="1.2" fill="#fff" stroke="#8c8c8c" stroke-width="0.5"/><path d="M305.5 182.6 H309 M299.5 186.5 H313.5 M299.5 186.5 V189 M313.5 186.5 V189 M296 192.5 H302 M296 192.5 V194.5 M302 192.5 V194.5 M305.5 184 V186.5" fill="none" stroke="#8c8c8c" stroke-width="0.55"/><circle cx="305.5" cy="182.6" r="1.3" fill="#fff" stroke="#8c8c8c" stroke-width="0.5"/><circle cx="299.5" cy="190" r="1.3" fill="#fff" stroke="#8c8c8c" stroke-width="0.5"/><circle cx="313.5" cy="190" r="1.3" fill="#fff" stroke="#8c8c8c" stroke-width="0.5"/><circle cx="294.8" cy="195.5" r="1.3" fill="#fff" stroke="#8c8c8c" stroke-width="0.5"/><circle cx="304" cy="195.5" r="1.3" fill="#fff" stroke="#8c8c8c" stroke-width="0.5"/><circle cx="313.5" cy="195.5" r="1.3" fill="#fff" stroke="#8c8c8c" stroke-width="0.5"/><path d="M344.4 185.4 V186.8 M337 186.8 H352.4 M337 186.8 V187.7 M352.4 186.8 V187.7 M337 194 V194.9 M352.4 194 V194.9" fill="none" stroke="#8c8c8c" stroke-width="0.55"/><rect x="341.30" y="179.50" width="7.40" height="6.30" fill="#9a9a9a"/><rect x="340.70" y="178.90" width="7.40" height="6.30" fill="#d4d4d4" stroke="#8c8c8c" stroke-width="0.45"/><rect x="341.90" y="180.10" width="5.00" height="3.90" fill="#fff"/><rect x="333.50" y="188.30" width="8.20" height="6.20" fill="#9a9a9a"/><rect x="332.90" y="187.70" width="8.20" height="6.20" fill="#d4d4d4" stroke="#8c8c8c" stroke-width="0.45"/><rect x="334.10" y="188.90" width="5.80" height="3.80" fill="#fff"/><rect x="348.70" y="188.30" width="8.40" height="6.20" fill="#9a9a9a"/><rect x="348.10" y="187.70" width="8.40" height="6.20" fill="#d4d4d4" stroke="#8c8c8c" stroke-width="0.45"/><rect x="349.30" y="188.90" width="6.00" height="3.80" fill="#fff"/><rect x="329.20" y="195.50" width="8.40" height="6.30" fill="#9a9a9a"/><rect x="328.60" y="194.90" width="8.40" height="6.30" fill="#d4d4d4" stroke="#8c8c8c" stroke-width="0.45"/><rect x="329.80" y="196.10" width="6.00" height="3.90" fill="#fff"/><rect x="338.90" y="195.50" width="7.90" height="6.30" fill="#9a9a9a"/><rect x="338.30" y="194.90" width="7.90" height="6.30" fill="#d4d4d4" stroke="#8c8c8c" stroke-width="0.45"/><rect x="339.50" y="196.10" width="5.50" height="3.90" fill="#fff"/><rect x="348.70" y="195.50" width="8.20" height="6.30" fill="#9a9a9a"/><rect x="348.10" y="194.90" width="8.20" height="6.30" fill="#d4d4d4" stroke="#8c8c8c" stroke-width="0.45"/><rect x="349.30" y="196.10" width="5.80" height="3.90" fill="#fff"/><rect x="364.20" y="179.90" width="28.20" height="5.90" fill="#fff" stroke="#8c8c8c" stroke-width="0.5"/><rect x="364.20" y="187.30" width="28.20" height="6.20" fill="#fff" stroke="#8c8c8c" stroke-width="0.5"/><rect x="364.20" y="194.90" width="28.20" height="6.10" fill="#fff" stroke="#8c8c8c" stroke-width="0.5"/><path d="M384.2 184.7 V188 M379.3 188 H389 M379.3 192.7 V195.5 M389 192.7 V195.5 M375.3 195.5 H388.5" fill="none" stroke="#8c8c8c" stroke-width="0.55"/><rect x="381.70" y="181.00" width="4.90" height="3.70" fill="#cfcfcf" stroke="#8c8c8c" stroke-width="0.5"/><rect x="376.80" y="188.30" width="4.90" height="4.10" fill="#cfcfcf" stroke="#8c8c8c" stroke-width="0.5"/><rect x="386.60" y="188.30" width="4.90" height="4.10" fill="#cfcfcf" stroke="#8c8c8c" stroke-width="0.5"/><rect x="372.90" y="195.90" width="4.90" height="4.10" fill="#cfcfcf" stroke="#8c8c8c" stroke-width="0.5"/><rect x="379.40" y="195.90" width="4.80" height="4.10" fill="#cfcfcf" stroke="#8c8c8c" stroke-width="0.5"/><rect x="386.00" y="195.90" width="4.90" height="4.10" fill="#cfcfcf" stroke="#8c8c8c" stroke-width="0.5"/><rect x="401.50" y="179.30" width="27.50" height="6.50" fill="#cfcfcf" stroke="#8c8c8c" stroke-width="0.5"/><rect x="401.50" y="186.80" width="18.00" height="6.50" fill="#cfcfcf" stroke="#8c8c8c" stroke-width="0.5"/><rect x="420.50" y="186.80" width="8.50" height="6.50" fill="#cfcfcf" stroke="#8c8c8c" stroke-width="0.5"/><rect x="401.50" y="194.30" width="8.50" height="6.50" fill="#cfcfcf" stroke="#8c8c8c" stroke-width="0.5"/><rect x="411.00" y="194.30" width="8.50" height="6.50" fill="#cfcfcf" stroke="#8c8c8c" stroke-width="0.5"/><rect x="420.50" y="194.30" width="8.50" height="6.50" fill="#cfcfcf" stroke="#8c8c8c" stroke-width="0.5"/><rect x="291.50" y="217.30" width="7.50" height="3.00" fill="#cfcfcf" stroke="#8c8c8c" stroke-width="0.5"/><rect x="301.00" y="213.80" width="7.50" height="3.00" fill="#cfcfcf" stroke="#8c8c8c" stroke-width="0.5"/><rect x="311.50" y="212.20" width="8.50" height="2.80" fill="#cfcfcf" stroke="#8c8c8c" stroke-width="0.5"/><rect x="311.50" y="217.50" width="8.50" height="2.80" fill="#cfcfcf" stroke="#8c8c8c" stroke-width="0.5"/><rect x="311.50" y="223.00" width="8.50" height="2.80" fill="#cfcfcf" stroke="#8c8c8c" stroke-width="0.5"/><path d="M299 218.8 H311.5 M304.8 216.8 V218.8 M310.5 213.6 V224.4 M310.5 213.6 H311.5 M310.5 224.4 H311.5" fill="none" stroke="#8c8c8c" stroke-width="0.55"/><rect x="328.00" y="207.80" width="9.00" height="6.50" fill="#cfcfcf" stroke="#8c8c8c" stroke-width="0.5"/><rect x="338.00" y="207.80" width="9.00" height="6.50" fill="#cfcfcf" stroke="#8c8c8c" stroke-width="0.5"/><rect x="348.00" y="207.80" width="9.00" height="6.50" fill="#cfcfcf" stroke="#8c8c8c" stroke-width="0.5"/><rect x="328.00" y="215.20" width="19.00" height="7.00" fill="#cfcfcf" stroke="#8c8c8c" stroke-width="0.5"/><rect x="348.00" y="215.20" width="9.00" height="7.00" fill="#cfcfcf" stroke="#8c8c8c" stroke-width="0.5"/><rect x="328.00" y="223.00" width="29.00" height="6.50" fill="#cfcfcf" stroke="#8c8c8c" stroke-width="0.5"/><rect x="368.40" y="208.40" width="3.50" height="21.20" fill="#cfcfcf" stroke="#8c8c8c" stroke-width="0.5"/><rect x="373.50" y="211.00" width="16.00" height="3.50" fill="#cfcfcf" stroke="#8c8c8c" stroke-width="0.5"/><rect x="373.50" y="217.50" width="16.00" height="3.50" fill="#cfcfcf" stroke="#8c8c8c" stroke-width="0.5"/><rect x="373.50" y="224.00" width="16.00" height="3.50" fill="#cfcfcf" stroke="#8c8c8c" stroke-width="0.5"/><path d="M372 219.2 H373.5 M372.7 212.8 V225.8" fill="none" stroke="#8c8c8c" stroke-width="0.55"/><rect x="401.20" y="217.00" width="6.50" height="4.00" fill="#cfcfcf" stroke="#8c8c8c" stroke-width="0.5"/><rect x="411.50" y="213.50" width="6.50" height="3.50" fill="#cfcfcf" stroke="#8c8c8c" stroke-width="0.5"/><rect x="411.50" y="222.00" width="6.50" height="3.50" fill="#cfcfcf" stroke="#8c8c8c" stroke-width="0.5"/><rect x="421.50" y="209.80" width="7.00" height="3.50" fill="#cfcfcf" stroke="#8c8c8c" stroke-width="0.5"/><rect x="421.50" y="215.50" width="7.00" height="3.50" fill="#cfcfcf" stroke="#8c8c8c" stroke-width="0.5"/><rect x="421.50" y="221.80" width="7.00" height="3.50" fill="#cfcfcf" stroke="#8c8c8c" stroke-width="0.5"/><path d="M407.7 219 Q409 216 411.5 215.2 M407.7 219 Q409 222 411.5 223.7 M418 215.2 L421.5 211.5 M418 215.2 L421.5 217.2 M418 223.7 H421.5" fill="none" stroke="#8c8c8c" stroke-width="0.55"/><rect x="293.30" y="236.00" width="8.00" height="22.00" fill="#fff" stroke="#8c8c8c" stroke-width="0.5"/><rect x="301.80" y="236.00" width="8.00" height="22.00" fill="#fff" stroke="#8c8c8c" stroke-width="0.5"/><rect x="310.30" y="236.00" width="8.30" height="22.00" fill="#fff" stroke="#8c8c8c" stroke-width="0.5"/><rect x="294.50" y="247.00" width="5.50" height="3.00" fill="#cfcfcf" stroke="#8c8c8c" stroke-width="0.5"/><rect x="303.00" y="241.50" width="5.50" height="3.00" fill="#cfcfcf" stroke="#8c8c8c" stroke-width="0.5"/><rect x="303.00" y="253.00" width="5.50" height="3.00" fill="#cfcfcf" stroke="#8c8c8c" stroke-width="0.5"/><rect x="311.50" y="240.00" width="6.00" height="3.00" fill="#cfcfcf" stroke="#8c8c8c" stroke-width="0.5"/><rect x="311.50" y="246.00" width="6.00" height="3.00" fill="#cfcfcf" stroke="#8c8c8c" stroke-width="0.5"/><rect x="311.50" y="252.00" width="6.00" height="3.00" fill="#cfcfcf" stroke="#8c8c8c" stroke-width="0.5"/><rect x="328.30" y="236.00" width="10.80" height="6.00" fill="#cfcfcf" stroke="#8c8c8c" stroke-width="0.5"/><rect x="343.20" y="236.00" width="12.50" height="6.00" fill="#cfcfcf" stroke="#8c8c8c" stroke-width="0.5"/><path d="M329.3 242 V254.2 M329.3 246.2 H330.5 M329.3 254.2 H330.5 M344 242 V254.2 M344 246.2 H344.6 M344 254.2 H344.6" fill="none" stroke="#8c8c8c" stroke-width="0.55"/><rect x="331.00" y="243.80" width="10.20" height="6" fill="#a0a0a0"/><rect x="330.50" y="243.30" width="10.20" height="6.00" fill="#fff" stroke="#8c8c8c" stroke-width="0.5"/><path d="M334.10 246.30 h3" stroke="#aaa" stroke-width="0.5"/><rect x="331.00" y="251.60" width="10.20" height="6" fill="#a0a0a0"/><rect x="330.50" y="251.10" width="10.20" height="6.00" fill="#fff" stroke="#8c8c8c" stroke-width="0.5"/><path d="M334.10 254.10 h3" stroke="#aaa" stroke-width="0.5"/><rect x="345.10" y="243.80" width="11.10" height="6" fill="#a0a0a0"/><rect x="344.60" y="243.30" width="11.10" height="6.00" fill="#fff" stroke="#8c8c8c" stroke-width="0.5"/><path d="M348.65 246.30 h3" stroke="#aaa" stroke-width="0.5"/><rect x="345.10" y="251.60" width="11.10" height="6" fill="#a0a0a0"/><rect x="344.60" y="251.10" width="11.10" height="6.00" fill="#fff" stroke="#8c8c8c" stroke-width="0.5"/><path d="M348.65 254.10 h3" stroke="#aaa" stroke-width="0.5"/><path d="M364.2 236.3 H393" stroke="#6a6a6a" stroke-width="0.8"/><path d="M365.3 239.3 H367.5 M372 239.3 H374.5 M372.5 247 H374.8 M372.5 254 H374.8" stroke="#9a9a9a" stroke-width="0.6"/><path d="M370 243.3 H393 M370 250.3 H393 M370 257.3 H393" stroke="#a6a6a6" stroke-width="0.7"/></svg>
<svg width="768" height="470" style="left:0;top:0"><defs><linearGradient id="po" x1="0" y1="0" x2="0" y2="1"><stop offset="0" stop-color="#f08a4b"/><stop offset="1" stop-color="#c5561a"/></linearGradient><linearGradient id="pg" x1="0" y1="0" x2="0" y2="1"><stop offset="0" stop-color="#b3b3b3"/><stop offset="1" stop-color="#7a7a7a"/></linearGradient><linearGradient id="py" x1="0" y1="0" x2="0" y2="1"><stop offset="0" stop-color="#f7c52a"/><stop offset="1" stop-color="#c08e06"/></linearGradient><linearGradient id="pb" x1="0" y1="0" x2="0" y2="1"><stop offset="0" stop-color="#5f8ad3"/><stop offset="1" stop-color="#2d569a"/></linearGradient><linearGradient id="pgr" x1="0" y1="0" x2="0" y2="1"><stop offset="0" stop-color="#85bd5c"/><stop offset="1" stop-color="#4f7f36"/></linearGradient></defs><rect x="461.9" y="150.1" width="41.9" height="25.5" fill="url(#po)" stroke="rgba(0,0,0,0.12)" stroke-width="0.5"/><rect x="476.9" y="161.7" width="11.7" height="1.6" fill="rgba(255,255,255,0.7)"/><rect x="508.3" y="150.1" width="41.9" height="25.5" fill="url(#pg)" stroke="rgba(0,0,0,0.12)" stroke-width="0.5"/><rect x="523.3" y="161.7" width="11.7" height="1.6" fill="rgba(255,255,255,0.7)"/><rect x="461.9" y="179.7" width="41.9" height="25.5" fill="url(#py)" stroke="rgba(0,0,0,0.12)" stroke-width="0.5"/><rect x="476.9" y="191.29999999999998" width="11.7" height="1.6" fill="rgba(255,255,255,0.7)"/><rect x="508.3" y="179.7" width="41.9" height="25.5" fill="url(#pb)" stroke="rgba(0,0,0,0.12)" stroke-width="0.5"/><rect x="523.3" y="191.29999999999998" width="11.7" height="1.6" fill="rgba(255,255,255,0.7)"/><rect x="484.9" y="209.2" width="41.9" height="25.5" fill="url(#pgr)" stroke="rgba(0,0,0,0.12)" stroke-width="0.5"/><rect x="499.9" y="220.79999999999998" width="11.7" height="1.6" fill="rgba(255,255,255,0.7)"/></svg>
<div class="t" style="left:454.00px;top:240.86px;font-size:5.2px;line-height:7.279999999999999px;color:#3a3a3a;font-weight:700;">Basic Block List</div>
<div class="r" style="left:448.6px;top:249.8px;width:116.39999999999998px;height:51.19999999999999px;background:#fff;border:0.8px solid #d0d0d0"></div>
<div class="t" style="left:453.60px;top:250.95px;font-size:5.5px;line-height:7.699999999999999px;color:#505050;font-weight:400;letter-spacing:0.2px">Use to show non-sequential or grouped</div>
<div class="t" style="left:453.60px;top:257.55px;font-size:5.5px;line-height:7.699999999999999px;color:#505050;font-weight:400;letter-spacing:0.2px">blocks of information. Maximizes both</div>
<div class="t" style="left:453.60px;top:264.15px;font-size:5.5px;line-height:7.699999999999999px;color:#505050;font-weight:400;letter-spacing:0.2px">horizontal and vertical display space for</div>
<div class="t" style="left:453.60px;top:270.75px;font-size:5.5px;line-height:7.699999999999999px;color:#505050;font-weight:400;letter-spacing:0.2px">shapes.</div>
<div class="r" style="left:486.3px;top:304.6px;width:36.400000000000034px;height:10.299999999999955px;background:#fdfdfd;border:0.9px solid #3f87d2;border-radius:2px"></div>
<div class="r" style="left:528.8px;top:304.6px;width:36.10000000000002px;height:10.299999999999955px;background:#fdfdfd;border:0.7px solid #d0d0d0;border-radius:2px"></div>
<div class="t" style="left:444.50px;width:120px;text-align:center;top:305.67px;font-size:5.9px;line-height:8.26px;color:#222;font-weight:400;">OK</div>
<div class="t" style="left:486.80px;width:120px;text-align:center;top:305.67px;font-size:5.9px;line-height:8.26px;color:#222;font-weight:400;">Cancel</div>
<svg width="768" height="470" style="left:0;top:0;pointer-events:none"><path d="M314.7 76.9 C290 75 272 66 273.2 46.3" fill="none" stroke="#e3262b" stroke-width="1.25" stroke-linecap="round"/><path d="M268.3 50.3 Q273.3 42.3 278.3 50.6" fill="none" stroke="#e3262b" stroke-width="1.25" stroke-linecap="round"/><path d="M285.8 200.4 L270 200.7 Q264 201 259.4 201.6" fill="none" stroke="#e3262b" stroke-width="1.2" stroke-linecap="round"/><path d="M261 197.6 Q258 200.5 259.4 202 Q260.5 204 263.3 205.5" fill="none" stroke="#e3262b" stroke-width="1.2" stroke-linecap="round"/></svg>
</body></html>
